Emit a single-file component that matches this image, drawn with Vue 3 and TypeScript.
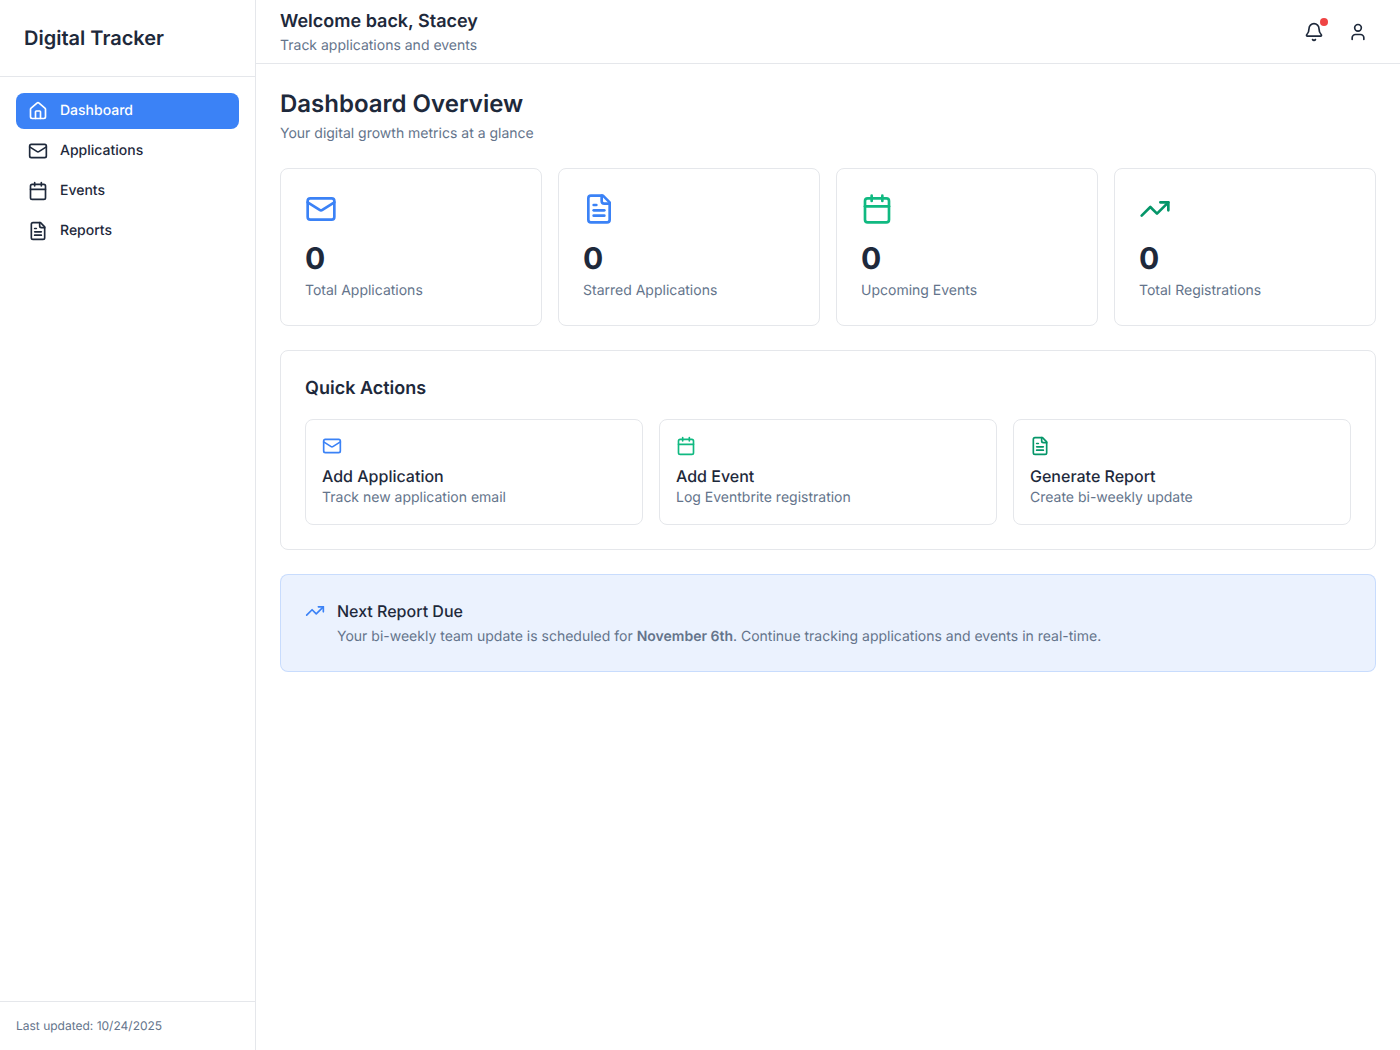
<script setup lang="ts">
type IconName = 'home' | 'mail' | 'calendar' | 'file' | 'trend' | 'bell' | 'user'

const icons: Record<IconName, string[]> = {
  home: [
    'M15 21v-8a1 1 0 0 0-1-1h-4a1 1 0 0 0-1 1v8',
    'M3 10a2 2 0 0 1 .709-1.528l7-5.999a2 2 0 0 1 2.582 0l7 5.999A2 2 0 0 1 21 10v9a2 2 0 0 1-2 2H5a2 2 0 0 1-2-2z'
  ],
  mail: [
    'M4 4h16a2 2 0 0 1 2 2v12a2 2 0 0 1-2 2H4a2 2 0 0 1-2-2V6a2 2 0 0 1 2-2z',
    'm22 7-8.97 5.7a1.94 1.94 0 0 1-2.06 0L2 7'
  ],
  calendar: [
    'M8 2v4',
    'M16 2v4',
    'M5 4h14a2 2 0 0 1 2 2v14a2 2 0 0 1-2 2H5a2 2 0 0 1-2-2V6a2 2 0 0 1 2-2z',
    'M3 10h18'
  ],
  file: [
    'M15 2H6a2 2 0 0 0-2 2v16a2 2 0 0 0 2 2h12a2 2 0 0 0 2-2V7Z',
    'M14 2v4a2 2 0 0 0 2 2h4',
    'M10 9H8',
    'M16 13H8',
    'M16 17H8'
  ],
  trend: ['M22 7 13.5 15.5 8.5 10.5 2 17', 'M16 7h6v6'],
  bell: [
    'M10.268 21a2 2 0 0 0 3.464 0',
    'M3.262 15.326A1 1 0 0 0 4 17h16a1 1 0 0 0 .74-1.673C19.41 13.956 18 12.499 18 8A6 6 0 0 0 6 8c0 4.499-1.411 5.956-2.738 7.326'
  ],
  user: [
    'M19 21v-2a4 4 0 0 0-4-4H9a4 4 0 0 0-4 4v2',
    'M16 7a4 4 0 1 1-8 0 4 4 0 0 1 8 0z'
  ]
}

const navItems: { label: string; icon: IconName; active?: boolean }[] = [
  { label: 'Dashboard', icon: 'home', active: true },
  { label: 'Applications', icon: 'mail' },
  { label: 'Events', icon: 'calendar' },
  { label: 'Reports', icon: 'file' }
]

const stats: { label: string; value: number; icon: IconName; tone: string }[] = [
  { label: 'Total Applications', value: 0, icon: 'mail', tone: 'blue' },
  { label: 'Starred Applications', value: 0, icon: 'file', tone: 'blue' },
  { label: 'Upcoming Events', value: 0, icon: 'calendar', tone: 'green' },
  { label: 'Total Registrations', value: 0, icon: 'trend', tone: 'teal' }
]

const actions: { title: string; text: string; icon: IconName; tone: string }[] = [
  { title: 'Add Application', text: 'Track new application email', icon: 'mail', tone: 'blue' },
  { title: 'Add Event', text: 'Log Eventbrite registration', icon: 'calendar', tone: 'green' },
  { title: 'Generate Report', text: 'Create bi-weekly update', icon: 'file', tone: 'teal' }
]
</script>

<template>
  <div class="layout">
    <aside class="sidebar">
      <div class="brand">Digital Tracker</div>
      <nav class="nav">
        <a v-for="item in navItems" :key="item.label" :class="['nav-item', { active: item.active }]">
          <svg class="icon icon-20" viewBox="0 0 24 24">
            <path v-for="d in icons[item.icon]" :key="d" :d="d" />
          </svg>
          <span>{{ item.label }}</span>
        </a>
      </nav>
      <div class="sidebar-footer">Last updated: 10/24/2025</div>
    </aside>

    <div class="content">
      <header class="topbar">
        <div>
          <div class="welcome">Welcome back, Stacey</div>
          <div class="welcome-sub">Track applications and events</div>
        </div>
        <div class="topbar-actions">
          <button class="icon-btn">
            <svg class="icon icon-20" viewBox="0 0 24 24">
              <path v-for="d in icons.bell" :key="d" :d="d" />
            </svg>
            <span class="dot"></span>
          </button>
          <button class="icon-btn">
            <svg class="icon icon-20" viewBox="0 0 24 24">
              <path v-for="d in icons.user" :key="d" :d="d" />
            </svg>
          </button>
        </div>
      </header>

      <main class="main">
        <h1 class="page-title">Dashboard Overview</h1>
        <p class="page-sub">Your digital growth metrics at a glance</p>

        <section class="stats">
          <div v-for="stat in stats" :key="stat.label" class="card stat">
            <svg :class="['icon', 'icon-32', stat.tone]" viewBox="0 0 24 24">
              <path v-for="d in icons[stat.icon]" :key="d" :d="d" />
            </svg>
            <div class="stat-value">{{ stat.value }}</div>
            <div class="stat-label">{{ stat.label }}</div>
          </div>
        </section>

        <section class="card quick">
          <h2 class="quick-title">Quick Actions</h2>
          <div class="quick-grid">
            <div v-for="action in actions" :key="action.title" class="action">
              <svg :class="['icon', 'icon-20', action.tone]" viewBox="0 0 24 24">
                <path v-for="d in icons[action.icon]" :key="d" :d="d" />
              </svg>
              <div class="action-title">{{ action.title }}</div>
              <div class="action-text">{{ action.text }}</div>
            </div>
          </div>
        </section>

        <section class="notice">
          <svg class="icon icon-20 blue notice-icon" viewBox="0 0 24 24">
            <path v-for="d in icons.trend" :key="d" :d="d" />
          </svg>
          <div>
            <div class="notice-title">Next Report Due</div>
            <p class="notice-text">
              Your bi-weekly team update is scheduled for <strong>November 6th</strong>. Continue tracking applications and events in real-time.
            </p>
          </div>
        </section>
      </main>
    </div>
  </div>
</template>

<style>
body {
  background: #fff;
}
</style>

<style scoped>
.layout {
  display: flex;
  height: 100vh;
  font-family: Inter, "Liberation Sans", sans-serif;
  color: #1e293b;
  background: #fff;
  text-rendering: geometricPrecision;
}

.icon {
  display: block;
  flex-shrink: 0;
  fill: none;
  stroke: currentColor;
  stroke-width: 2;
  stroke-linecap: round;
  stroke-linejoin: round;
}

.icon-20 {
  width: 20px;
  height: 20px;
}

.icon-32 {
  width: 32px;
  height: 32px;
}

.blue {
  color: #3b82f6;
}

.green {
  color: #10b981;
}

.teal {
  color: #059669;
}

.sidebar {
  display: flex;
  flex-direction: column;
  width: 256px;
  flex-shrink: 0;
  border-right: 1px solid #e5e7eb;
  box-sizing: border-box;
}

.brand {
  padding: 24px;
  font-size: 20px;
  line-height: 28px;
  font-weight: 600;
  border-bottom: 1px solid #e5e7eb;
}

.nav {
  display: flex;
  flex-direction: column;
  gap: 4px;
  flex: 1;
  padding: 16px;
}

.nav-item {
  display: flex;
  align-items: center;
  gap: 12px;
  padding: 8px 12px;
  border-radius: 8px;
  font-size: 14px;
  line-height: 20px;
  font-weight: 500;
}

.nav-item.active {
  background: #3b82f6;
  color: #fff;
}

.sidebar-footer {
  padding: 16px;
  border-top: 1px solid #e5e7eb;
  font-size: 12px;
  line-height: 16px;
  color: #64748b;
}

.content {
  flex: 1;
  min-width: 0;
  display: flex;
  flex-direction: column;
}

.topbar {
  display: flex;
  align-items: center;
  justify-content: space-between;
  height: 64px;
  box-sizing: border-box;
  padding: 8px 24px;
  border-bottom: 1px solid #e5e7eb;
}

.welcome {
  font-size: 18px;
  line-height: 28px;
  font-weight: 600;
}

.welcome-sub {
  font-size: 14px;
  line-height: 20px;
  color: #64748b;
}

.topbar-actions {
  display: flex;
  align-items: center;
  gap: 8px;
}

.icon-btn {
  position: relative;
  padding: 8px;
  border: 0;
  background: none;
  color: inherit;
}

.dot {
  position: absolute;
  top: 4px;
  right: 4px;
  width: 8px;
  height: 8px;
  border-radius: 50%;
  background: #ef4444;
}

.main {
  padding: 24px;
}

.page-title {
  margin: 0;
  font-size: 24px;
  line-height: 32px;
  font-weight: 600;
}

.page-sub {
  margin: 4px 0 24px;
  font-size: 14px;
  line-height: 20px;
  color: #64748b;
}

.card {
  border: 1px solid #e5e7eb;
  border-radius: 8px;
  padding: 24px;
  background: #fff;
}

.stats {
  display: grid;
  grid-template-columns: repeat(4, 1fr);
  gap: 16px;
  margin-bottom: 24px;
}

.stat-value {
  margin-top: 16px;
  font-size: 30px;
  line-height: 36px;
  font-weight: 700;
}

.stat-label {
  margin-top: 4px;
  font-size: 14px;
  line-height: 20px;
  color: #64748b;
}

.quick {
  margin-bottom: 24px;
}

.quick-title {
  margin: 0 0 16px;
  font-size: 18px;
  line-height: 28px;
  font-weight: 600;
}

.quick-grid {
  display: grid;
  grid-template-columns: repeat(3, 1fr);
  gap: 16px;
}

.action {
  padding: 16px;
  border: 1px solid #e5e7eb;
  border-radius: 8px;
}

.action-title {
  margin-top: 8px;
  font-size: 16px;
  line-height: 24px;
  font-weight: 500;
}

.action-text {
  font-size: 14px;
  line-height: 20px;
  color: #64748b;
}

.notice {
  display: flex;
  align-items: flex-start;
  gap: 12px;
  padding: 24px;
  border: 1px solid rgba(59, 130, 246, 0.2);
  border-radius: 8px;
  background: rgba(59, 130, 246, 0.1);
}

.notice-icon {
  margin-top: 2px;
}

.notice-title {
  font-size: 16px;
  line-height: 24px;
  font-weight: 500;
}

.notice-text {
  margin: 4px 0 0;
  font-size: 14px;
  line-height: 20px;
  color: #64748b;
}

.notice-text strong {
  font-weight: 600;
}
</style>
